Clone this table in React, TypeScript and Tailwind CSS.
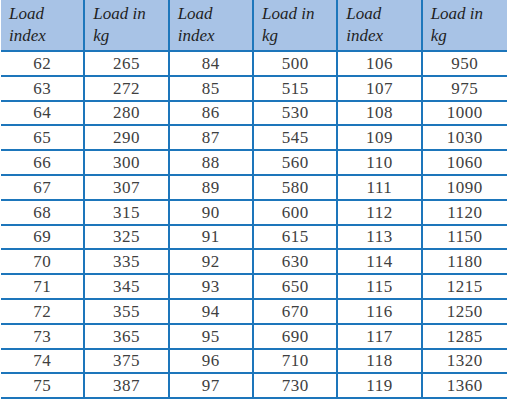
import React from "react";

const rows: [number, number, number, number, number, number][] = [
  [62, 265, 84, 500, 106, 950],
  [63, 272, 85, 515, 107, 975],
  [64, 280, 86, 530, 108, 1000],
  [65, 290, 87, 545, 109, 1030],
  [66, 300, 88, 560, 110, 1060],
  [67, 307, 89, 580, 111, 1090],
  [68, 315, 90, 600, 112, 1120],
  [69, 325, 91, 615, 113, 1150],
  [70, 335, 92, 630, 114, 1180],
  [71, 345, 93, 650, 115, 1215],
  [72, 355, 94, 670, 116, 1250],
  [73, 365, 95, 690, 117, 1285],
  [74, 375, 96, 710, 118, 1320],
  [75, 387, 97, 730, 119, 1360],
];

const headers = [
  ["Load", "index"],
  ["Load in", "kg"],
  ["Load", "index"],
  ["Load in", "kg"],
  ["Load", "index"],
  ["Load in", "kg"],
];

export default function App() {
  return (
    <div className="w-[512px] h-[404px] bg-white overflow-hidden font-['Liberation_Serif','Times_New_Roman',serif]">
      <div className="ml-[1px] w-[506px]">
        <div className="grid grid-cols-6 bg-[#a8c3e6] border-b-2 border-[#1d76bb] h-[52px]">
          {headers.map((h, i) => (
            <div
              key={i}
              className={`pl-[8px] pt-[3px] italic text-[17px] leading-[22px] text-[#1f1f1f] ${
                i < 5 ? "border-r-2 border-[#1d76bb]" : ""
              }`}
            >
              <div>{h[0]}</div>
              <div>{h[1]}</div>
            </div>
          ))}
        </div>
        {rows.map((r, ri) => (
          <div
            key={ri}
            className="grid grid-cols-6 border-b-2 border-[#1d76bb] h-[24.8px]"
          >
            {r.map((v, i) => (
              <div
                key={i}
                className={`flex items-center justify-center text-[17px] leading-none tracking-[0.5px] text-[#404040] ${
                  i < 5 ? "border-r-2 border-[#1d76bb]" : ""
                }`}
              >
                {v}
              </div>
            ))}
          </div>
        ))}
      </div>
    </div>
  );
}
